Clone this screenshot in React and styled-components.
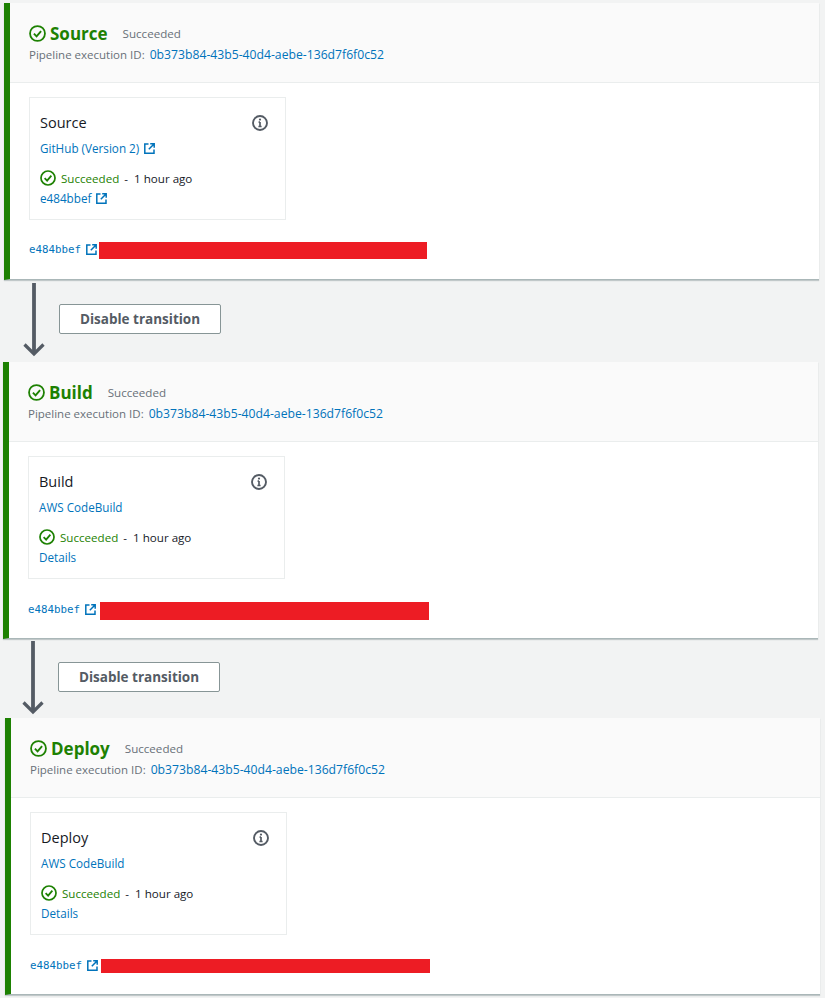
import React from "react";
import styled, { createGlobalStyle } from "styled-components";

const GlobalStyle = createGlobalStyle`
  html, body {
    margin: 0;
    padding: 0;
    background: #f2f3f3;
    font-family: "Open Sans", "Noto Sans", sans-serif;
  }
`;

const CheckIcon = ({ size = 18 }) => (
  <svg width={size} height={size} viewBox="0 0 18 18" fill="none" stroke="#1d8102" strokeWidth="1.9">
    <circle cx="9" cy="9" r="7.9" />
    <path d="M5.2 9.2 8 12l4.8-5.6" strokeWidth="2" />
  </svg>
);

const ExternalIcon = () => (
  <svg width="11" height="11" viewBox="0 0 11 11" fill="none" stroke="#0073bb" strokeWidth="1.5">
    <path d="M4.5 1H.8v9.2H10V6.5" />
    <path d="M6.2 .8h4v4M10 1 4.8 6.2" />
  </svg>
);

const InfoIcon = () => (
  <svg width="16" height="16" viewBox="0 0 16 16" fill="none" stroke="#545b64">
    <circle cx="8" cy="8" r="7" strokeWidth="1.9" />
    <path d="M8 7v4.3M6.4 11.5h3.2M6.6 7.2H8" strokeWidth="1.7" />
    <circle cx="8" cy="4.6" r="1.1" fill="#545b64" stroke="none" />
  </svg>
);

const DownArrow = () => (
  <ArrowSvg width="22" height="74" viewBox="0 0 22 74" fill="none" stroke="#545b64" strokeWidth="3.2">
    <path d="M11 0v71" strokeWidth="3.8" />
    <path d="M1.5 61.5 11 71l9.5-9.5" />
  </ArrowSvg>
);

const stages = [
  {
    name: "Source",
    shift: 4,
    provider: "GitHub (Version 2)",
    providerExternal: true,
    detail: "e484bbef",
    detailExternal: true,
    commitGap: 20,
    redact: { left: 2, width: 328, height: 17, drop: 1 },
  },
  {
    name: "Build",
    shift: 3,
    provider: "AWS CodeBuild",
    detail: "Details",
    commitGap: 21,
    redact: { left: 4, width: 329, height: 18, drop: 2 },
  },
  {
    name: "Deploy",
    shift: 5,
    provider: "AWS CodeBuild",
    detail: "Details",
    commitGap: 21,
    redact: { left: 3, width: 329, height: 14, drop: 1 },
  },
];

const Stage = ({ stage }) => (
  <Panel $shift={stage.shift}>
    <Header>
      <TitleRow>
        <CheckIcon size={17} />
        <Title>{stage.name}</Title>
        <HeaderStatus>Succeeded</HeaderStatus>
      </TitleRow>
      <ExecutionRow>
        Pipeline execution ID:
        <Link>0b373b84-43b5-40d4-aebe-136d7f6f0c52</Link>
      </ExecutionRow>
    </Header>
    <Body>
      <ActionCard>
        <CardTop>
          <CardTitle>{stage.name}</CardTitle>
          <InfoIcon />
        </CardTop>
        <CardLink $gap={7}>
          {stage.provider}
          {stage.providerExternal && <ExternalIcon />}
        </CardLink>
        <StatusRow>
          <CheckIcon size={16} />
          <Good>Succeeded</Good>
          <Muted>-&nbsp; 1 hour ago</Muted>
        </StatusRow>
        <CardLink $gap={3}>
          {stage.detail}
          {stage.detailExternal && <ExternalIcon />}
        </CardLink>
      </ActionCard>
      <CommitRow $gap={stage.commitGap}>
        <Commit>e484bbef</Commit>
        <ExternalIcon />
        <Redaction
          $left={stage.redact.left}
          $width={stage.redact.width}
          $height={stage.redact.height}
          $drop={stage.redact.drop}
        />
      </CommitRow>
    </Body>
  </Panel>
);

const Transition = ({ shift, height, lift }) => (
  <TransitionRow $shift={shift} $height={height} $lift={lift}>
    <DownArrow />
    <DisableButton>Disable transition</DisableButton>
  </TransitionRow>
);

export default function App() {
  return (
    <Page>
      <GlobalStyle />
      <Stage stage={stages[0]} />
      <Transition shift={23} height={82} lift={5} />
      <Stage stage={stages[1]} />
      <Transition shift={22} height={79} lift={3} />
      <Stage stage={stages[2]} />
    </Page>
  );
}

const Page = styled.div`
  width: 825px;
  height: 998px;
  padding-top: 3px;
  box-sizing: border-box;
  overflow: hidden;
`;

const Panel = styled.section`
  width: 815px;
  height: 277px;
  margin-left: ${(p) => p.$shift}px;
  box-sizing: border-box;
  background: #fff;
  border-left: 6px solid #1d8102;
  border-bottom: 1px solid #aab7b8;
  box-shadow: 0 1px 1px rgba(0, 28, 36, 0.2);
  display: flex;
  flex-direction: column;
`;

const Header = styled.header`
  height: 80px;
  box-sizing: border-box;
  padding: 19px 19px 0;
  background: #fafafa;
  border-bottom: 1px solid #eaeded;
`;

const TitleRow = styled.div`
  display: flex;
  align-items: center;
  height: 22px;
`;

const Title = styled.h2`
  margin: 0 0 0 4px;
  font-size: 17px;
  font-weight: 700;
  color: #1d8102;
`;

const HeaderStatus = styled.span`
  margin-left: 15px;
  padding-top: 1px;
  font-size: 11.6px;
  color: #687078;
`;

const ExecutionRow = styled.div`
  display: flex;
  gap: 5px;
  margin-top: 2px;
  font-size: 11.5px;
  line-height: 18px;
  color: #687078;
`;

const Link = styled.a`
  font-size: 12.2px;
  color: #0073bb;
`;

const Body = styled.div`
  flex: 1;
  padding: 14px 19px 0;
`;

const ActionCard = styled.div`
  width: 257px;
  height: 123px;
  box-sizing: border-box;
  padding: 15px 10px 0;
  border: 1px solid #eaeded;
`;

const CardTop = styled.div`
  display: flex;
  justify-content: space-between;
  align-items: center;
  height: 20px;
  padding-right: 7px;
`;

const CardTitle = styled.div`
  padding-bottom: 2px;
  font-size: 14.5px;
  color: #16191f;
`;

const CardLink = styled.div`
  display: flex;
  align-items: center;
  gap: 5px;
  margin-top: ${(p) => p.$gap}px;
  height: 16px;
  font-size: 11.7px;
  color: #0073bb;
`;

const StatusRow = styled.div`
  display: flex;
  align-items: center;
  gap: 5px;
  margin-top: 13px;
  height: 18px;
  font-size: 11.6px;
`;

const Good = styled.span`
  color: #1d8102;
`;

const Muted = styled.span`
  color: #16191f;
`;

const CommitRow = styled.div`
  display: flex;
  align-items: center;
  margin-top: ${(p) => p.$gap}px;
  height: 18px;
  gap: 5px;
`;

const Commit = styled.span`
  font-family: "DejaVu Sans Mono", "Liberation Mono", monospace;
  font-size: 10.8px;
  color: #0073bb;
`;

const Redaction = styled.span`
  display: block;
  width: ${(p) => p.$width}px;
  height: ${(p) => p.$height}px;
  margin-left: ${(p) => p.$left - 5}px;
  margin-top: ${(p) => p.$drop * 2}px;
  background: #ed1c24;
`;

const TransitionRow = styled.div`
  display: flex;
  align-items: center;
  gap: 14px;
  height: ${(p) => p.$height}px;
  box-sizing: border-box;
  padding-bottom: ${(p) => p.$lift}px;
  margin-left: ${(p) => p.$shift}px;
`;

const ArrowSvg = styled.svg`
  margin-top: 2px;
`;

const DisableButton = styled.button`
  width: 162px;
  height: 30px;
  box-sizing: border-box;
  background: #fff;
  border: 1px solid #879596;
  border-radius: 2px;
  color: #545b64;
  font-family: "Open Sans", "Noto Sans", sans-serif;
  font-size: 13.5px;
  font-weight: 700;
`;
